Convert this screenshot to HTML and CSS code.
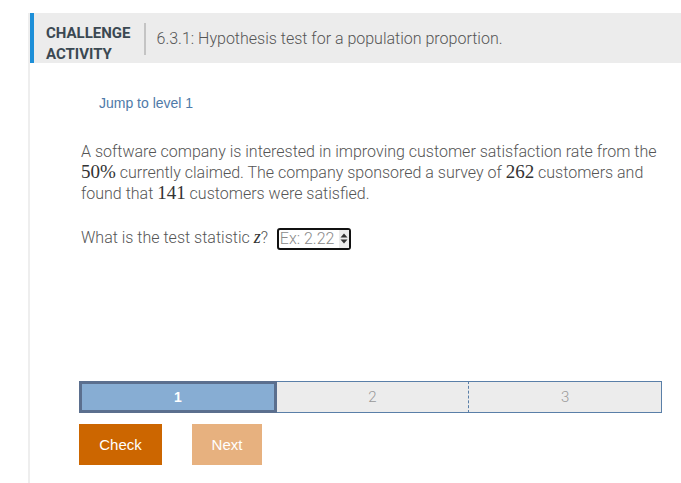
FILE: index.html
```html
<!doctype html>
<html lang="en">
<head>
    <meta charset="UTF-8">
    <title>Challenge activity</title>
    <link rel="stylesheet" href="styles.css">
</head>
<body>
    <main class="card">
        <header class="activity-head">
            <div class="activity-label">CHALLENGE<br>ACTIVITY</div>
            <div class="activity-sep"></div>
            <div class="activity-title">6.3.1: Hypothesis test for a population proportion.</div>
        </header>

        <div class="activity-body">
            <a class="jump">Jump to level 1</a>

            <p class="question">
                A software company is interested in improving customer satisfaction rate from the
                <span class="math">50%</span> currently claimed. The company sponsored a survey of
                <span class="math">262</span> customers and found that <span class="math">141</span>
                customers were satisfied.
            </p>

            <p class="ask">
                What is the test statistic <i class="math-var">z</i>?
                <label class="answer">
                    <input type="text" placeholder="Ex: 2.22">
                    <span class="spin">
                        <svg width="8" height="13" viewBox="0 0 8 13">
                            <path d="M4 1.5 L7.5 5.5 L0.5 5.5 Z" fill="#333"/>
                            <path d="M4 11.5 L7.5 7.5 L0.5 7.5 Z" fill="#333"/>
                        </svg>
                    </span>
                </label>
            </p>

            <div class="levels">
                <div class="level level-current">1</div>
                <div class="level">2</div>
                <div class="level level-last">3</div>
            </div>

            <div class="actions">
                <button class="btn btn-check">Check</button>
                <button class="btn btn-next">Next</button>
            </div>
        </div>
    </main>
</body>
</html>
```

FILE: styles.css
```css
* {
    margin: 0;
    padding: 0;
    box-sizing: border-box;
}

body {
    background: #fff;
    font-family: Roboto, "Liberation Sans", sans-serif;
    color: #555;
}

.card {
    margin: 13px 0 0 28px;
    height: 470px;
    border-left: 2px solid #eeeeee;
}

.activity-head {
    display: flex;
    align-items: center;
    height: 50px;
    background: #ececec;
    border-left: 4px solid #1d8fd8;
}

.activity-label {
    align-self: flex-start;
    padding: 10px 13px 0 12px;
    font-size: 15px;
    font-weight: 700;
    line-height: 21px;
    color: #3b4852;
}

.activity-sep {
    width: 2px;
    height: 32px;
    margin-top: 2px;
    background: #c4c4c4;
}

.activity-title {
    padding-left: 11px;
    font-size: 16px;
    font-weight: 300;
    color: #555;
}

.activity-body {
    padding: 0 0 0 49px;
}

.jump {
    display: block;
    margin: 32px 0 0 20px;
    font-family: "Liberation Sans", Arial, sans-serif;
    font-size: 14px;
    color: #4f7aa8;
    cursor: pointer;
}

.question {
    margin: 30px 0 0 2px;
    width: 590px;
    font-size: 16px;
    font-weight: 300;
    line-height: 21px;
    color: #555;
}

.math {
    display: inline-block;
    font-family: "Liberation Serif", "DejaVu Serif", serif;
    font-size: 19px;
    font-weight: 400;
    line-height: 17px;
    color: #333;
}

.math-var {
    display: inline-block;
    font-family: "Liberation Serif", serif;
    font-size: 18px;
    line-height: 16px;
    color: #333;
}

.ask {
    margin: 23px 0 0 2px;
    font-size: 16px;
    font-weight: 300;
    line-height: 21px;
}

.answer {
    display: inline-flex;
    align-items: center;
    vertical-align: middle;
    width: 74px;
    height: 22px;
    margin-left: 5px;
    border: 2px solid #111;
    border-radius: 3px;
}

.answer input {
    width: 60px;
    border: none;
    outline: none;
    padding-left: 1px;
    font: 300 16px Roboto, sans-serif;
    background: none;
}

.answer input::placeholder {
    color: #8a8a8a;
}

.spin {
    display: flex;
    align-items: center;
    justify-content: center;
    width: 10px;
    height: 18px;
    background: #ececec;
}

.levels {
    display: flex;
    width: 583px;
    height: 32px;
    margin-top: 131px;
}

.level {
    flex: 1;
    display: flex;
    align-items: center;
    justify-content: center;
    font-size: 15px;
    font-weight: 300;
    color: #999;
    background: #ececec;
    border-top: 1px solid #5a7fa8;
    border-bottom: 1px solid #5a7fa8;
}

.level-current {
    background: #87add3;
    border: 3px solid #5b6f8e;
    color: #fff;
    font-family: "Liberation Sans", Arial, sans-serif;
    font-size: 14px;
    font-weight: 700;
}

.level-last {
    border-left: 1px dashed #5a7fa8;
    border-right: 1px solid #5a7fa8;
}

.actions {
    display: flex;
    gap: 30px;
    margin-top: 11px;
}

.btn {
    height: 41px;
    border: none;
    font-family: "Liberation Sans", Arial, sans-serif;
    font-size: 15px;
    color: #fff;
    cursor: pointer;
}

.btn-check {
    width: 83px;
    background: #cc6600;
}

.btn-next {
    width: 70px;
    background: #e7b17f;
}
```
